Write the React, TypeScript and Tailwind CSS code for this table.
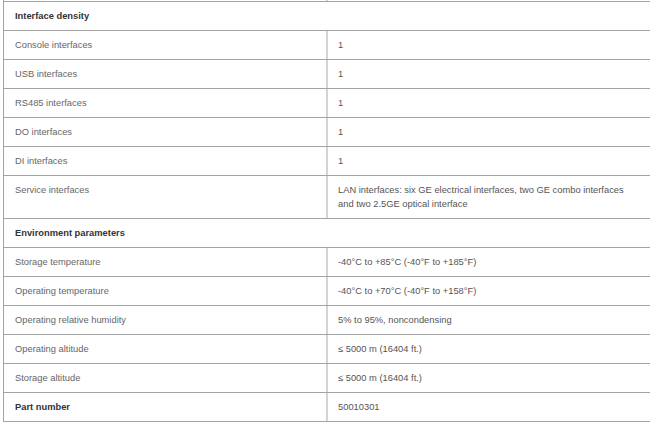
import React from "react";

type Row =
  | { kind: "section"; label: string }
  | { kind: "item"; label: string; value: string; bold?: boolean };

const rows: Row[] = [
  { kind: "section", label: "Interface density" },
  { kind: "item", label: "Console interfaces", value: "1" },
  { kind: "item", label: "USB interfaces", value: "1" },
  { kind: "item", label: "RS485 interfaces", value: "1" },
  { kind: "item", label: "DO interfaces", value: "1" },
  { kind: "item", label: "DI interfaces", value: "1" },
  {
    kind: "item",
    label: "Service interfaces",
    value:
      "LAN interfaces: six GE electrical interfaces, two GE combo interfaces and two 2.5GE optical interface",
  },
  { kind: "section", label: "Environment parameters" },
  { kind: "item", label: "Storage temperature", value: "-40°C to +85°C (-40°F to +185°F)" },
  { kind: "item", label: "Operating temperature", value: "-40°C to +70°C (-40°F to +158°F)" },
  { kind: "item", label: "Operating relative humidity", value: "5% to 95%, noncondensing" },
  { kind: "item", label: "Operating altitude", value: "≤ 5000 m (16404 ft.)" },
  { kind: "item", label: "Storage altitude", value: "≤ 5000 m (16404 ft.)" },
  { kind: "item", label: "Part number", value: "50010301", bold: true },
];

const App = () => {
  return (
    <div className="w-[650px] h-[425px] overflow-hidden bg-white font-['Liberation_Sans',Arial,sans-serif] text-[9.33px] leading-[14px]">
      <div className="ml-[3px] w-[657px] border-l border-[#a3a3a3]">
        {/* tail of the previous row */}
        <div className="grid grid-cols-[324px_1fr] h-[1px]">
          <div className="border-r-2 border-[#d4d4d4]" />
          <div />
        </div>

        {rows.map((row, i) =>
          row.kind === "section" ? (
            <div
              key={i}
              className="border-t border-[#a3a3a3] pl-[11px] py-[7px] font-bold text-[#333]"
            >
              {row.label}
            </div>
          ) : (
            <div key={i} className="grid grid-cols-[324px_1fr] border-t border-[#a3a3a3]">
              <div
                className={`pl-[11px] py-[7px] border-r-2 border-[#d4d4d4] ${
                  row.bold ? "font-bold text-[#333]" : "text-[#666]"
                }`}
              >
                {row.label}
              </div>
              <div className="pl-[10px] pr-[30px] py-[7px] text-[#555]">{row.value}</div>
            </div>
          )
        )}
        <div className="border-t border-[#a3a3a3]" />
      </div>
    </div>
  );
};

export default App;
